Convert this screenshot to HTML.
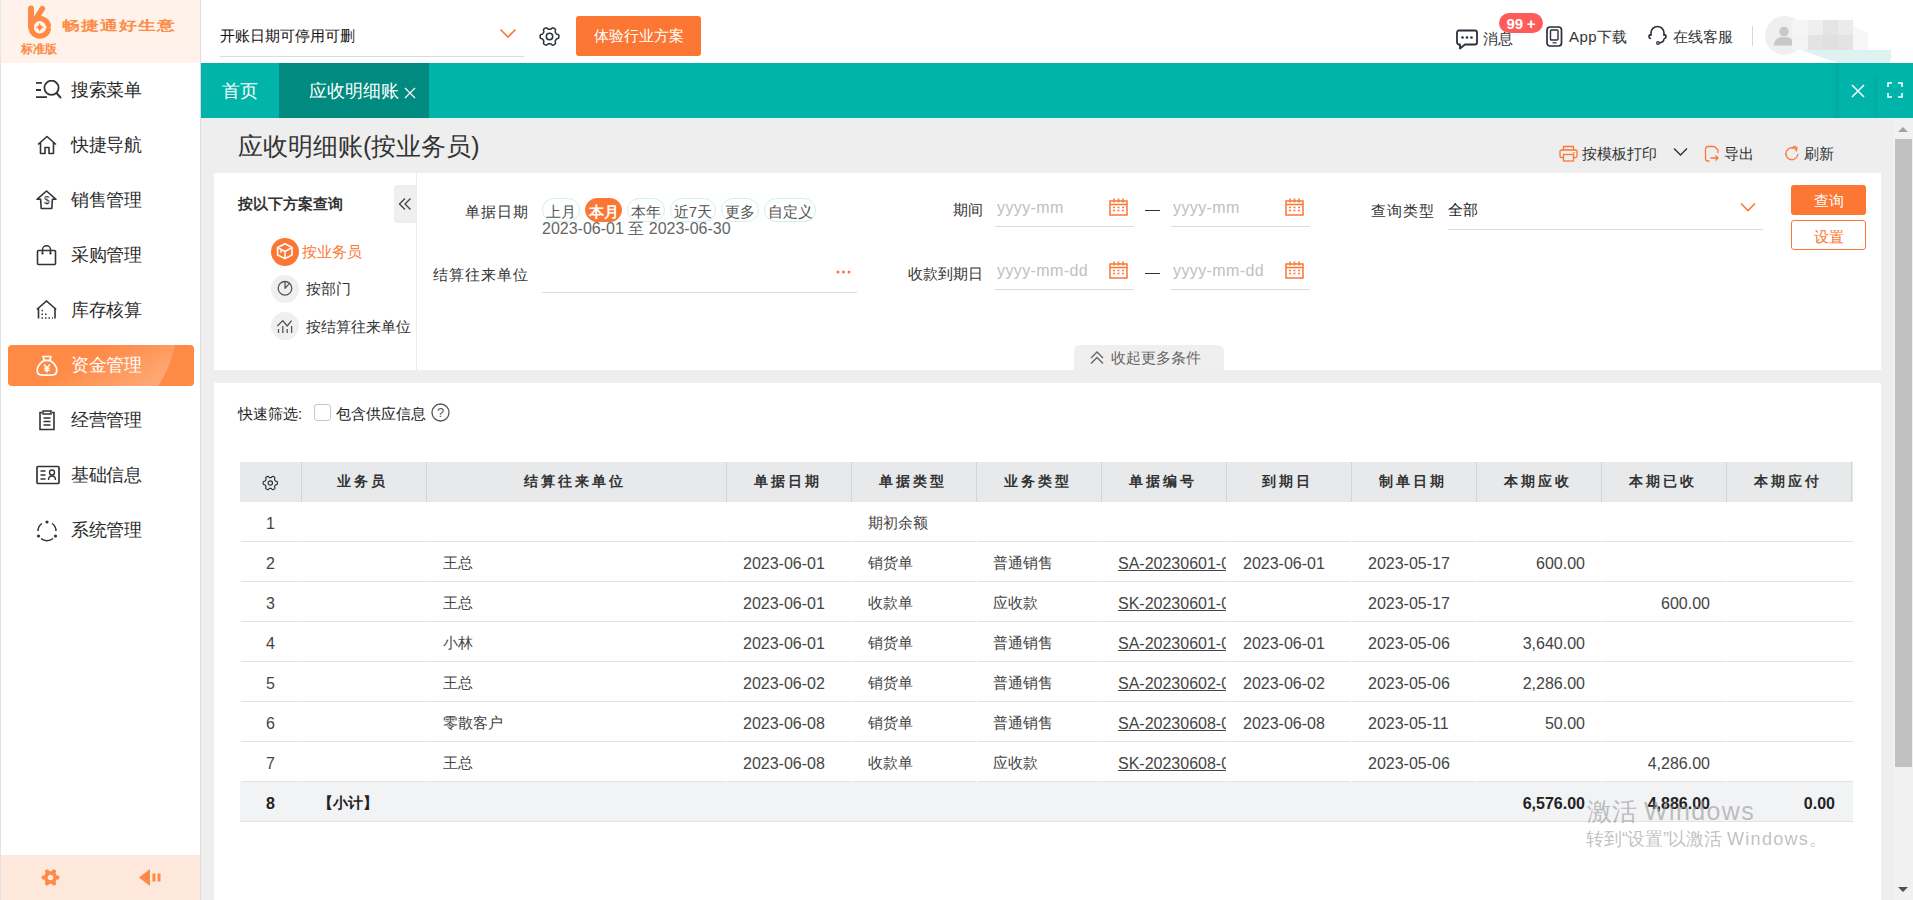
<!DOCTYPE html>
<html><head><meta charset="utf-8">
<style>
*{margin:0;padding:0;box-sizing:border-box}
html,body{width:1913px;height:900px;overflow:hidden;background:#eeeeee;font-family:"Liberation Sans",sans-serif;color:#333}
.a{position:absolute;white-space:nowrap}
svg{display:block}
/* header */
#logo{left:0;top:0;width:200px;height:63px;background:#fef2ea;border-left:1px solid #e3e6ea}
#hdr{left:201px;top:0;width:1712px;height:63px;background:#fff}
#side{left:0;top:63px;width:201px;height:837px;background:#fff;border-left:1px solid #e3e3e3;border-right:1px solid #dcdcdc}
.mi{left:0;width:200px;height:55px}
.mi .t{position:absolute;left:71px;top:0;font-size:18px;line-height:55px;color:#2b2b2b;letter-spacing:-0.5px}
.mi svg{position:absolute;left:36px;top:17px}
#tabs{left:201px;top:63px;width:1712px;height:55px;background:#00b4aa}
.lbl{font-size:15px;color:#333;text-align:right}
.ul{border-bottom:1px solid #dcdcdc}
.ph{font-size:16px;color:#c0c0c0;letter-spacing:0.4px}
.pill{height:24px;border:1px solid #d3f0ee;border-radius:12px;font-size:15px;line-height:25px;text-align:center;color:#555}
th,td{font-size:15px}
.th{top:461px;height:40px;font-size:14px;font-weight:bold;line-height:40px;text-align:center;color:#333;letter-spacing:3px}
.rl{height:1px;background:#e3e3e3}
.c{font-size:15px;color:#444;line-height:42px}
.d{font-size:16px;margin-top:1px}
.n{text-align:right}
.lnk{text-decoration:underline;overflow:hidden;width:108px}
</style></head><body>

<!-- LOGO -->
<div class="a" id="logo">
  <svg class="a" style="left:20px;top:0px" width="40" height="42" viewBox="0 0 40 42">
    <path d="M10 8.5V27" stroke="#fd8a45" stroke-width="6" stroke-linecap="round"/>
    <path d="M21.3 8.6L15.5 18" stroke="#fd8a45" stroke-width="5.6" stroke-linecap="round"/>
    <path d="M27.4 25.2A8.8 8.8 0 1 0 27.4 29.4" fill="none" stroke="#fd8a45" stroke-width="5.2" stroke-linecap="round"/>
    <path d="M18.7 22.8Q19.3 26.7 23.2 27.3Q19.3 27.9 18.7 31.8Q18.1 27.9 14.2 27.3Q18.1 26.7 18.7 22.8Z" fill="#fd8a45"/>
  </svg>
  <div class="a" style="left:61px;top:17px;font-size:14px;line-height:18px;font-weight:bold;color:#fd8a45;letter-spacing:0.6px;transform:scale(1.3,0.95);transform-origin:0 0">畅捷通好生意</div>
  <div class="a" style="left:20px;top:41px;font-size:12px;line-height:16px;font-weight:bold;color:#fd8a45">标准版</div>
</div>

<!-- HEADER -->
<div class="a" style="left:200px;top:0;width:1px;height:63px;background:#dedede"></div>
<div class="a" id="hdr"></div>
<div class="a" style="left:220px;top:26px;font-size:15px;line-height:20px;color:#111">开账日期可停用可删</div>
<div class="a" style="left:220px;top:55px;width:304px;height:2px;border-bottom:1px solid #dcdcdc"></div>
<svg class="a" style="left:499px;top:28px" width="18" height="11" viewBox="0 0 18 11"><path d="M1.5 1.5 L9 9 L16.5 1.5" fill="none" stroke="#fd7734" stroke-width="1.6"/></svg>
<svg class="a" style="left:539px;top:26px" width="21" height="21" viewBox="0 0 21 21"><path d="M10.50 3.27L10.82 3.28L11.13 3.28L11.45 3.27L11.79 3.19L12.17 2.95L12.65 2.48L13.17 2.04L13.64 1.87L14.06 1.90L14.45 2.02L14.83 2.19L15.19 2.38L15.53 2.60L15.86 2.84L16.17 3.12L16.40 3.47L16.49 3.96L16.37 4.63L16.20 5.28L16.18 5.73L16.29 6.06L16.44 6.34L16.60 6.61L16.76 6.89L16.91 7.16L17.07 7.44L17.24 7.71L17.47 7.96L17.88 8.17L18.52 8.35L19.16 8.58L19.54 8.91L19.73 9.29L19.82 9.68L19.86 10.09L19.87 10.50L19.86 10.91L19.82 11.32L19.73 11.71L19.54 12.09L19.16 12.42L18.52 12.65L17.88 12.83L17.47 13.04L17.24 13.29L17.07 13.56L16.91 13.84L16.76 14.11L16.60 14.39L16.44 14.66L16.29 14.94L16.18 15.27L16.20 15.72L16.37 16.37L16.49 17.04L16.40 17.53L16.17 17.88L15.86 18.16L15.53 18.40L15.19 18.62L14.83 18.81L14.45 18.98L14.06 19.10L13.64 19.13L13.17 18.96L12.65 18.52L12.17 18.05L11.79 17.81L11.45 17.73L11.13 17.72L10.82 17.72L10.50 17.73L10.18 17.72L9.87 17.72L9.55 17.73L9.21 17.81L8.83 18.05L8.35 18.52L7.83 18.96L7.36 19.13L6.94 19.10L6.55 18.98L6.17 18.81L5.81 18.62L5.47 18.40L5.14 18.16L4.83 17.88L4.60 17.53L4.51 17.04L4.63 16.37L4.80 15.72L4.82 15.27L4.71 14.94L4.56 14.66L4.40 14.39L4.24 14.11L4.09 13.84L3.93 13.56L3.76 13.29L3.53 13.04L3.12 12.83L2.48 12.65L1.84 12.42L1.46 12.09L1.27 11.71L1.18 11.32L1.14 10.91L1.13 10.50L1.14 10.09L1.18 9.68L1.27 9.29L1.46 8.91L1.84 8.58L2.48 8.35L3.12 8.17L3.53 7.96L3.76 7.71L3.93 7.44L4.09 7.16L4.24 6.89L4.40 6.61L4.56 6.34L4.71 6.06L4.82 5.73L4.80 5.28L4.63 4.63L4.51 3.96L4.60 3.47L4.83 3.12L5.14 2.84L5.47 2.60L5.81 2.38L6.17 2.19L6.55 2.02L6.94 1.90L7.36 1.87L7.83 2.04L8.35 2.48L8.83 2.95L9.21 3.19L9.55 3.27L9.87 3.28L10.18 3.28Z" fill="none" stroke="#2b2f3a" stroke-width="1.5" stroke-linejoin="round"/><circle cx="10.5" cy="10.5" r="3.2" fill="none" stroke="#2b2f3a" stroke-width="1.5"/></svg>
<div class="a" style="left:576px;top:16px;width:125px;height:40px;background:#fd7734;border-radius:3px;color:#fff;font-size:15px;line-height:40px;text-align:center">体验行业方案</div>

<!-- header right -->
<svg class="a" style="left:1456px;top:29px" width="22" height="21" viewBox="0 0 22 21"><path d="M3 1.5h16a2 2 0 0 1 2 2v10a2 2 0 0 1-2 2H9l-5 4v-4H3a2 2 0 0 1-2-2v-10a2 2 0 0 1 2-2z" fill="none" stroke="#2b2f3a" stroke-width="1.8" stroke-linejoin="round"/><circle cx="6.5" cy="8.5" r="1.3" fill="#2b2f3a"/><circle cx="11" cy="8.5" r="1.3" fill="#2b2f3a"/><circle cx="15.5" cy="8.5" r="1.3" fill="#2b2f3a"/></svg>
<div class="a" style="left:1483px;top:29px;font-size:15px;line-height:20px;color:#333">消息</div>
<div class="a" style="left:1499px;top:13px;width:44px;height:20px;background:#fe5b5b;border-radius:10px;color:#fff;font-size:15px;font-weight:bold;line-height:21px;text-align:center;letter-spacing:-0.2px">99 +</div>
<svg class="a" style="left:1546px;top:26px" width="17" height="21" viewBox="0 0 17 21"><rect x="1" y="1" width="14.5" height="19" rx="3" fill="none" stroke="#2b2f3a" stroke-width="1.7"/><rect x="4.5" y="4" width="7.5" height="10" rx="1" fill="none" stroke="#2b2f3a" stroke-width="1.4"/><path d="M6.5 16.8h4" stroke="#2b2f3a" stroke-width="1.2"/></svg>
<div class="a" style="left:1569px;top:27px;font-size:15px;line-height:20px;color:#333;letter-spacing:0.4px">App下载</div>
<svg class="a" style="left:1648px;top:25px" width="20" height="20" viewBox="0 0 20 20"><path d="M3 11V8a6.5 6.5 0 0 1 13 0v3" fill="none" stroke="#2b2f3a" stroke-width="1.6"/><path d="M3 9.5a1.8 1.8 0 0 0 0 4M16 9.5a1.8 1.8 0 0 1 0 4" fill="none" stroke="#2b2f3a" stroke-width="1.6"/><path d="M16 13.5q0 4-5 4.5" fill="none" stroke="#2b2f3a" stroke-width="1.5"/><circle cx="10" cy="18" r="1.3" fill="none" stroke="#2b2f3a" stroke-width="1.3"/></svg>
<div class="a" style="left:1673px;top:27px;font-size:15px;line-height:20px;color:#333">在线客服</div>
<div class="a" style="left:1752px;top:26px;width:1px;height:20px;background:#d8d8d8"></div>
<div class="a" style="left:1765px;top:16px;width:39px;height:39px;border-radius:50%;background:#efefef"></div>
<svg class="a" style="left:1774px;top:25px" width="22" height="22" viewBox="0 0 22 22"><circle cx="10" cy="6.5" r="4.8" fill="#c8c8c8"/><path d="M0 20.5q0-7 7-8.5h6q7 1.5 7 8.5z" fill="#c8c8c8"/></svg>
<div class="a" style="left:1792px;top:20px;width:16px;height:15px;background:#f5f5f5"></div>
<div class="a" style="left:1808px;top:20px;width:15px;height:15px;background:#efefef"></div>
<div class="a" style="left:1823px;top:20px;width:15px;height:15px;background:#e4e4e4"></div>
<div class="a" style="left:1838px;top:20px;width:15px;height:15px;background:#ebebec"></div>
<div class="a" style="left:1792px;top:35px;width:16px;height:15px;background:#f3f3f3"></div>
<div class="a" style="left:1808px;top:35px;width:15px;height:15px;background:#e3e3e3"></div>
<div class="a" style="left:1823px;top:35px;width:15px;height:15px;background:#e0e0df"></div>
<div class="a" style="left:1838px;top:35px;width:15px;height:15px;background:#e3e3e3"></div>
<svg class="a" style="left:1838px;top:20px" width="31" height="30" viewBox="0 0 31 30"><path d="M0 0H8L15 5V15H0z" fill="#ebebec"/><path d="M15 5.5L30 13V30H15z" fill="#f6f7f9"/></svg>
<svg class="a" style="left:1795px;top:47px" width="100" height="18" viewBox="0 0 100 18"><path d="M6 3H96Q97 10 94 17H47Q30 12 6 3z" fill="#dff2f1"/></svg>

<!-- SIDEBAR -->
<div class="a" id="side">
</div>
<div class="a mi" style="top:63px"><svg width="26" height="20" viewBox="0 0 26 20"><path d="M0 2.8h6M0 10h5M0 17.2h11" stroke="#333" stroke-width="1.8"/><circle cx="15.5" cy="7.8" r="7.1" fill="none" stroke="#333" stroke-width="1.8"/><path d="M20.5 13l4 4.5" stroke="#333" stroke-width="1.9" stroke-linecap="round"/></svg><div class="t">搜索菜单</div></div>
<div class="a mi" style="top:118px"><svg width="22" height="20" viewBox="0 0 22 20"><path d="M2 9.5L11 1.5l9 8M4.5 7.5V18.5h4.5v-6h4v6h4.5V7.5" fill="none" stroke="#333" stroke-width="1.6" stroke-linejoin="round"/></svg><div class="t">快捷导航</div></div>
<div class="a mi" style="top:173px"><svg width="22" height="20" viewBox="0 0 22 20"><path d="M10.5 1L1 9.3h3.6L5.2 18.5h10.6l.6-9.2H20z" fill="none" stroke="#333" stroke-width="1.6" stroke-linejoin="round"/><text x="10.8" y="14.3" font-size="10" text-anchor="middle" fill="#333" font-family="Liberation Sans">$</text></svg><div class="t">销售管理</div></div>
<div class="a mi" style="top:228px"><svg width="22" height="21" viewBox="0 0 22 21"><rect x="1.5" y="5.5" width="18" height="14" rx="1" fill="none" stroke="#333" stroke-width="1.6"/><path d="M6.5 8.5V4.8a4 4 0 0 1 8 0v3.7" fill="none" stroke="#333" stroke-width="1.5"/><circle cx="6.5" cy="8.5" r="1.1" fill="#333"/><circle cx="14.5" cy="8.5" r="1.1" fill="#333"/></svg><div class="t">采购管理</div></div>
<div class="a mi" style="top:283px"><svg width="22" height="20" viewBox="0 0 22 20"><path d="M0.8 9.5L10.5 1l9.7 8.5M2.5 7.8V18.5M19 7.8V18.5" fill="none" stroke="#333" stroke-width="1.6"/><path d="M5.5 10.5h1.5M5.5 14.2h1.5M9 14.2h1.5M5.5 18h1.5M9 18h1.5M12.5 18h1.5M16 18h1" stroke="#333" stroke-width="1.6"/></svg><div class="t">库存核算</div></div>
<div class="a" style="left:8px;top:345px;width:186px;height:41px;border-radius:4px;background:#fe8a45"></div>
<svg class="a" style="left:8px;top:345px" width="186" height="41" viewBox="0 0 186 41"><defs><linearGradient id="lg" x1="0" y1="0" x2="1" y2="0.6"><stop offset="0.35" stop-color="#fff" stop-opacity="0"/><stop offset="1" stop-color="#fff" stop-opacity="0.25"/></linearGradient></defs><path d="M40 0H167Q162 24 150 41H40z" fill="url(#lg)"/></svg>
<div class="a mi" style="top:338px"><svg width="22" height="22" viewBox="0 0 22 22"><path d="M8 5.5Q1.5 9.5 1.2 15Q1.2 20 6 20.2H16Q20.8 20 20.8 15Q20.5 9.5 14 5.5z" fill="none" stroke="#fff" stroke-width="1.7" stroke-linejoin="round"/><path d="M7 1.5H15L13.8 5.5H8.2z" fill="none" stroke="#fff" stroke-width="1.6" stroke-linejoin="round"/><path d="M8 9.5l3 3.2 3-3.2M11 12.7V17.5M8.3 13.2h5.4M8.3 15.3h5.4" fill="none" stroke="#fff" stroke-width="1.4"/></svg><div class="t" style="color:#fff">资金管理</div></div>
<div class="a mi" style="top:393px"><svg width="22" height="21" viewBox="0 0 22 21"><path d="M6 2.5h-2v17h14v-17h-2" fill="none" stroke="#333" stroke-width="1.6"/><rect x="7" y="1" width="8" height="3" fill="none" stroke="#333" stroke-width="1.5"/><path d="M7.5 8h7M7.5 11.5h7M7.5 15h7" stroke="#333" stroke-width="1.5"/></svg><div class="t">经营管理</div></div>
<div class="a mi" style="top:448px"><svg width="24" height="20" viewBox="0 0 24 20"><rect x="1" y="1.5" width="22" height="17" rx="1" fill="none" stroke="#333" stroke-width="1.7"/><path d="M4.5 6h5M4.5 10h5M4.5 14h5" stroke="#333" stroke-width="1.5"/><circle cx="16" cy="7.5" r="2.5" fill="none" stroke="#333" stroke-width="1.4"/><path d="M12.5 15q0-4 3.5-4t3.5 4" fill="none" stroke="#333" stroke-width="1.4"/></svg><div class="t">基础信息</div></div>
<div class="a mi" style="top:503px"><svg width="22" height="22" viewBox="0 0 22 22"><path d="M6 3.5A9 9 0 0 0 2 11M16 3.5A9 9 0 0 1 20 11M5 18.5a9 9 0 0 0 12 0" fill="none" stroke="#333" stroke-width="1.5"/><circle cx="11" cy="2" r="1.6" fill="#333"/><circle cx="2.5" cy="16" r="1.6" fill="#333"/><circle cx="19.5" cy="16" r="1.6" fill="#333"/></svg><div class="t">系统管理</div></div>
<div class="a" style="left:1px;top:855px;width:199px;height:45px;background:#fee7db"></div>
<svg class="a" style="left:41px;top:868px" width="19" height="19" viewBox="0 0 19 19"><path d="M9.50 3.17L9.78 3.17L10.05 3.17L10.34 3.14L10.64 3.04L11.00 2.73L11.47 2.16L11.99 1.61L12.46 1.38L12.86 1.38L13.24 1.48L13.59 1.64L13.93 1.82L14.26 2.02L14.57 2.26L14.85 2.53L15.05 2.88L15.09 3.40L14.87 4.13L14.61 4.82L14.52 5.28L14.59 5.60L14.71 5.85L14.84 6.10L14.98 6.33L15.12 6.57L15.26 6.81L15.42 7.05L15.66 7.26L16.11 7.42L16.84 7.53L17.57 7.71L18.01 8.00L18.21 8.35L18.31 8.73L18.36 9.11L18.37 9.50L18.36 9.89L18.31 10.27L18.21 10.65L18.01 11.00L17.57 11.29L16.84 11.47L16.11 11.58L15.66 11.74L15.42 11.95L15.26 12.19L15.12 12.43L14.98 12.67L14.84 12.90L14.71 13.15L14.59 13.40L14.52 13.72L14.61 14.18L14.87 14.87L15.09 15.60L15.05 16.12L14.85 16.47L14.57 16.74L14.26 16.98L13.93 17.18L13.59 17.36L13.24 17.52L12.86 17.62L12.46 17.62L11.99 17.39L11.47 16.84L11.00 16.27L10.64 15.96L10.34 15.86L10.05 15.83L9.78 15.83L9.50 15.83L9.22 15.83L8.95 15.83L8.66 15.86L8.36 15.96L8.00 16.27L7.53 16.84L7.01 17.39L6.54 17.62L6.14 17.62L5.76 17.52L5.41 17.36L5.07 17.18L4.74 16.98L4.43 16.74L4.15 16.47L3.95 16.12L3.91 15.60L4.13 14.87L4.39 14.18L4.48 13.72L4.41 13.40L4.29 13.15L4.16 12.90L4.02 12.67L3.88 12.43L3.74 12.19L3.58 11.95L3.34 11.74L2.89 11.58L2.16 11.47L1.43 11.29L0.99 11.00L0.79 10.65L0.69 10.27L0.64 9.89L0.63 9.50L0.64 9.11L0.69 8.73L0.79 8.35L0.99 8.00L1.43 7.71L2.16 7.53L2.89 7.42L3.34 7.26L3.58 7.05L3.74 6.81L3.88 6.57L4.02 6.33L4.16 6.10L4.29 5.85L4.41 5.60L4.48 5.28L4.39 4.82L4.13 4.13L3.91 3.40L3.95 2.88L4.15 2.53L4.43 2.26L4.74 2.02L5.07 1.82L5.41 1.64L5.76 1.48L6.14 1.38L6.54 1.38L7.01 1.61L7.53 2.16L8.00 2.73L8.36 3.04L8.66 3.14L8.95 3.17L9.22 3.17Z" fill="#fd8a45"/><circle cx="9.5" cy="9.5" r="2.8" fill="#fee7db"/></svg>
<svg class="a" style="left:138px;top:868px" width="24" height="19" viewBox="0 0 24 19"><path d="M1 9.5L12 1v17z" fill="#fd8a45"/><rect x="14.5" y="5.5" width="3" height="8" fill="#fd8a45"/><rect x="19.5" y="5.5" width="3" height="8" fill="#fd8a45"/></svg>

<!-- TABS -->
<div class="a" id="tabs"></div>
<div class="a" style="left:201px;top:64px;width:78px;height:55px;color:#fff;font-size:18px;line-height:55px;text-align:center">首页</div>
<div class="a" style="left:279px;top:63px;width:150px;height:55px;background:#008a80"></div><div class="a" style="left:279px;top:64px;height:55px;color:#fff;font-size:18px;line-height:55px;padding-left:30px">应收明细账</div><svg class="a" style="left:404px;top:87px" width="12" height="12" viewBox="0 0 12 12"><path d="M1 1l10 10M11 1L1 11" stroke="#fff" stroke-width="1.2"/></svg>
<div class="a" style="left:1831px;top:63px;width:8px;height:55px;background:linear-gradient(90deg,rgba(0,0,0,0),rgba(0,0,0,0.06))"></div><div class="a" style="left:1872px;top:75px;width:5px;height:43px;background:linear-gradient(90deg,rgba(0,0,0,0),rgba(0,0,0,0.05))"></div>
<svg class="a" style="left:1851px;top:84px" width="14" height="14" viewBox="0 0 14 14"><path d="M1 1l12 12M13 1L1 13" stroke="#fff" stroke-width="1.5"/></svg>
<svg class="a" style="left:1887px;top:82px" width="16" height="16" viewBox="0 0 16 16"><path d="M1 5V1h4M11 1h4v4M15 11v4h-4M5 15H1v-4" fill="none" stroke="#fff" stroke-width="1.6"/></svg>

<!-- scrollbar -->
<div class="a" style="left:1893px;top:118px;width:20px;height:782px;background:#f1f1f1"></div>
<svg class="a" style="left:1898px;top:126px" width="10" height="7" viewBox="0 0 10 7"><path d="M0 6L5 1l5 5z" fill="#a3a3a3"/></svg>
<div class="a" style="left:1895px;top:139px;width:17px;height:628px;background:#c1c1c1"></div>
<svg class="a" style="left:1898px;top:886px" width="10" height="7" viewBox="0 0 10 7"><path d="M0 1L5 6l5-5z" fill="#505050"/></svg>

<!-- TITLE & TOOLBAR -->
<div class="a" style="left:238px;top:128px;font-size:25px;line-height:36px;color:#333">应收明细账(按业务员)</div>

<!-- QUERY PANEL -->
<div class="a" style="left:214px;top:173px;width:1667px;height:197px;background:#fff"></div>
<div class="a" style="left:416px;top:173px;width:1px;height:197px;background:#ececec"></div>


<!-- RESULT PANEL -->
<div class="a" style="left:214px;top:383px;width:1667px;height:517px;background:#fff"></div>
<!-- toolbar -->
<svg class="a" style="left:1559px;top:145px" width="19" height="17" viewBox="0 0 19 17"><path d="M4.5 5V1.5h10V5" fill="none" stroke="#fd7734" stroke-width="1.3"/><path d="M4.5 12.5H2.5a1.5 1.5 0 0 1-1.5-1.5V6.5A1.5 1.5 0 0 1 2.5 5h14A1.5 1.5 0 0 1 18 6.5V11a1.5 1.5 0 0 1-1.5 1.5h-2" fill="none" stroke="#fd7734" stroke-width="1.3"/><rect x="4.5" y="9.5" width="10" height="6.5" fill="none" stroke="#fd7734" stroke-width="1.3"/><circle cx="15" cy="7.8" r="0.9" fill="#fd7734"/></svg>
<div class="a" style="left:1582px;top:144px;font-size:15px;line-height:20px;color:#333">按模板打印</div>
<svg class="a" style="left:1673px;top:147px" width="15" height="10" viewBox="0 0 15 10"><path d="M1 1.5l6.5 6.5 6.5-6.5" fill="none" stroke="#333" stroke-width="1.4"/></svg>
<svg class="a" style="left:1704px;top:145px" width="16" height="17" viewBox="0 0 16 17"><path d="M10.5 1.5H4a2.5 2.5 0 0 0-2.5 2.5v9.5A2.5 2.5 0 0 0 4 16h1.5M10.5 1.5l3.5 3.5v3" fill="none" stroke="#fd7734" stroke-width="1.3" stroke-linejoin="round"/><path d="M6.5 13h7.5M11.5 10.5l2.5 2.5-2.5 2.5" fill="none" stroke="#fd7734" stroke-width="1.3"/></svg>
<div class="a" style="left:1724px;top:144px;font-size:15px;line-height:20px;color:#333">导出</div>
<svg class="a" style="left:1784px;top:145px" width="16" height="17" viewBox="0 0 16 17"><path d="M13.8 9.5A6 6 0 1 1 11.5 4" fill="none" stroke="#fd7734" stroke-width="1.3" stroke-linecap="round"/><path d="M9.5 1.5l3.5.8-.8 3.7" fill="none" stroke="#fd7734" stroke-width="1.3" stroke-linecap="round" stroke-linejoin="round"/></svg>
<div class="a" style="left:1804px;top:144px;font-size:15px;line-height:20px;color:#333">刷新</div>

<!-- query left -->
<div class="a" style="left:238px;top:194px;font-size:15px;line-height:20px;font-weight:bold;color:#333">按以下方案查询</div>
<div class="a" style="left:394px;top:185px;width:22px;height:38px;background:#efefef;border-radius:4px 0 0 4px"></div>
<svg class="a" style="left:398px;top:197px" width="14" height="14" viewBox="0 0 14 14"><path d="M7 1.5L1.5 7 7 12.5M12.5 1.5L7 7l5.5 5.5" fill="none" stroke="#444" stroke-width="1.4"/></svg>
<div class="a" style="left:271px;top:238px;width:28px;height:28px;border-radius:50%;background:#fd7734"></div>
<svg class="a" style="left:276px;top:243px" width="18" height="18" viewBox="0 0 18 18"><path d="M9 0.8L16 4.5V12L9 15.6 1.6 12V4.5z" fill="none" stroke="#fff" stroke-width="1.6" stroke-linejoin="round"/><path d="M1.8 4.6L9 8.5l7-3.9M9 8.5v7" fill="none" stroke="#fff" stroke-width="1.6" stroke-linejoin="round"/><path d="M5 6.6v3.2" stroke="#fff" stroke-width="1.4"/></svg>
<div class="a" style="left:302px;top:242px;font-size:15px;line-height:20px;color:#fd7734">按业务员</div>
<div class="a" style="left:271px;top:275px;width:28px;height:28px;border-radius:50%;background:#efefef"></div>
<svg class="a" style="left:277px;top:280px" width="16" height="17" viewBox="0 0 16 17"><circle cx="8" cy="8.3" r="6.8" fill="none" stroke="#555" stroke-width="1.3"/><path d="M8 1.5V8.3L12.3 3.6" fill="none" stroke="#555" stroke-width="1.3" stroke-linejoin="round"/></svg>
<div class="a" style="left:306px;top:279px;font-size:15px;line-height:20px;color:#333">按部门</div>
<div class="a" style="left:271px;top:312px;width:28px;height:28px;border-radius:50%;background:#efefef"></div>
<svg class="a" style="left:275px;top:318px" width="20" height="17" viewBox="0 0 20 17"><path d="M2.3 8L7.8 2.6 12.2 8 16.6 2.6" fill="none" stroke="#555" stroke-width="1.3" stroke-linejoin="round"/><path d="M3.5 11v4M7.8 8v7M12.2 11v4M16.6 8v7" stroke="#555" stroke-width="1.3"/></svg>
<div class="a" style="left:306px;top:317px;font-size:15px;line-height:20px;color:#333">按结算往来单位</div>

<!-- form row 1 -->
<div class="a lbl" style="left:428px;top:202px;width:101px;line-height:20px;letter-spacing:1px">单据日期</div>
<div class="a pill" style="left:542px;top:198px;width:38px">上月</div>
<div class="a pill" style="left:585px;top:198px;width:37px;background:#fd7734;border-color:#fd7734;color:#fff;font-weight:bold">本月</div>
<div class="a pill" style="left:627px;top:198px;width:38px">本年</div>
<div class="a pill" style="left:670px;top:198px;width:46px">近7天</div>
<div class="a pill" style="left:721px;top:198px;width:38px">更多</div>
<div class="a pill" style="left:764px;top:198px;width:52px">自定义</div>
<div class="a" style="left:542px;top:220px;font-size:16px;line-height:18px;color:#666">2023-06-01 至 2023-06-30</div>

<div class="a lbl" style="left:900px;top:200px;width:83px;line-height:20px">期间</div>
<div class="a ul" style="left:995px;top:200px;width:139px;height:27px"></div>
<div class="a ph" style="left:997px;top:198px;line-height:20px">yyyy-mm</div>
<div class="a ul" style="left:1171px;top:200px;width:139px;height:27px"></div>
<div class="a ph" style="left:1173px;top:198px;line-height:20px">yyyy-mm</div>
<div class="a" style="left:1145px;top:210px;width:15px;height:1px;background:#333"></div>

<div class="a lbl" style="left:1340px;top:201px;width:95px;line-height:20px;letter-spacing:1px">查询类型</div>
<div class="a" style="left:1448px;top:200px;font-size:15px;line-height:20px;color:#222">全部</div>
<div class="a ul" style="left:1448px;top:200px;width:315px;height:30px"></div>
<svg class="a" style="left:1740px;top:202px" width="16" height="10" viewBox="0 0 16 10"><path d="M1 1.5l7 7 7-7" fill="none" stroke="#fd7734" stroke-width="1.6"/></svg>
<div class="a" style="left:1791px;top:185px;width:75px;height:30px;background:#fd7734;border-radius:3px;color:#fff;font-size:15px;line-height:32px;text-align:center">查询</div>
<div class="a" style="left:1791px;top:220px;width:75px;height:30px;background:#fff;border:1px solid #fd7734;border-radius:3px;color:#fd7734;font-size:15px;line-height:31px;text-align:center">设置</div>

<!-- form row 2 -->
<div class="a lbl" style="left:400px;top:265px;width:129px;line-height:20px;letter-spacing:1px">结算往来单位</div>
<div class="a ul" style="left:542px;top:262px;width:315px;height:31px"></div>
<svg class="a" style="left:836px;top:270px" width="15" height="4" viewBox="0 0 15 4"><circle cx="2" cy="2" r="1.5" fill="#fd7734"/><circle cx="7.5" cy="2" r="1.5" fill="#fd7734"/><circle cx="13" cy="2" r="1.5" fill="#fd7734"/></svg>
<div class="a lbl" style="left:880px;top:264px;width:103px;line-height:20px">收款到期日</div>
<div class="a ul" style="left:995px;top:263px;width:139px;height:27px"></div>
<div class="a ph" style="left:997px;top:261px;line-height:20px">yyyy-mm-dd</div>
<div class="a ul" style="left:1171px;top:263px;width:139px;height:27px"></div>
<div class="a ph" style="left:1173px;top:261px;line-height:20px">yyyy-mm-dd</div>
<div class="a" style="left:1145px;top:273px;width:15px;height:1px;background:#333"></div>
<svg class="a" style="left:1109px;top:198px" width="19" height="18" viewBox="0 0 19 18"><rect x="1" y="3" width="17" height="14" fill="none" stroke="#fd7734" stroke-width="1.5"/><path d="M1 6.5h17M5 0.5v4M14 0.5v4M9.5 0.5v4" stroke="#fd7734" stroke-width="1.5"/><path d="M4 9.5h2M8.5 9.5h2M13 9.5h2M4 12.5h2M8.5 12.5h2M13 12.5h2" stroke="#fd7734" stroke-width="1.3"/></svg><svg class="a" style="left:1285px;top:198px" width="19" height="18" viewBox="0 0 19 18"><rect x="1" y="3" width="17" height="14" fill="none" stroke="#fd7734" stroke-width="1.5"/><path d="M1 6.5h17M5 0.5v4M14 0.5v4M9.5 0.5v4" stroke="#fd7734" stroke-width="1.5"/><path d="M4 9.5h2M8.5 9.5h2M13 9.5h2M4 12.5h2M8.5 12.5h2M13 12.5h2" stroke="#fd7734" stroke-width="1.3"/></svg><svg class="a" style="left:1109px;top:261px" width="19" height="18" viewBox="0 0 19 18"><rect x="1" y="3" width="17" height="14" fill="none" stroke="#fd7734" stroke-width="1.5"/><path d="M1 6.5h17M5 0.5v4M14 0.5v4M9.5 0.5v4" stroke="#fd7734" stroke-width="1.5"/><path d="M4 9.5h2M8.5 9.5h2M13 9.5h2M4 12.5h2M8.5 12.5h2M13 12.5h2" stroke="#fd7734" stroke-width="1.3"/></svg><svg class="a" style="left:1285px;top:261px" width="19" height="18" viewBox="0 0 19 18"><rect x="1" y="3" width="17" height="14" fill="none" stroke="#fd7734" stroke-width="1.5"/><path d="M1 6.5h17M5 0.5v4M14 0.5v4M9.5 0.5v4" stroke="#fd7734" stroke-width="1.5"/><path d="M4 9.5h2M8.5 9.5h2M13 9.5h2M4 12.5h2M8.5 12.5h2M13 12.5h2" stroke="#fd7734" stroke-width="1.3"/></svg>
<!-- collapse tab -->
<div class="a" style="left:1074px;top:345px;width:150px;height:25px;background:#efefef;border-radius:6px 6px 0 0"></div>
<svg class="a" style="left:1090px;top:351px" width="14" height="13" viewBox="0 0 14 13"><path d="M1 7l6-6 6 6M1 12.5l6-6 6 6" fill="none" stroke="#666" stroke-width="1.4"/></svg>
<div class="a" style="left:1111px;top:348px;font-size:15px;line-height:20px;color:#666">收起更多条件</div>

<!-- quick filter -->
<div class="a" style="left:238px;top:404px;font-size:15px;line-height:20px;color:#222">快速筛选:</div>
<div class="a" style="left:314px;top:404px;width:17px;height:17px;border:1px solid #c8c8c8;border-radius:3px;background:#fff"></div>
<div class="a" style="left:336px;top:404px;font-size:15px;line-height:20px;color:#222">包含供应信息</div>
<svg class="a" style="left:431px;top:403px" width="19" height="19" viewBox="0 0 19 19"><circle cx="9.5" cy="9.5" r="8.5" fill="none" stroke="#555" stroke-width="1.3"/><text x="9.5" y="14" font-size="13" text-anchor="middle" fill="#555" font-family="Liberation Sans">?</text></svg>


<!-- TABLE -->
<div class="a" style="left:240px;top:462px;width:1613px;height:40px;background:#e8e9eb"></div>
<div class="a" style="left:301px;top:462px;width:1px;height:40px;background:#d4d5d7"></div>
<div class="a th" style="left:301px;width:125px;padding-right:2px">业务员</div>
<div class="a" style="left:426px;top:462px;width:1px;height:40px;background:#d4d5d7"></div>
<div class="a th" style="left:426px;width:300px;padding-right:2px">结算往来单位</div>
<div class="a" style="left:726px;top:462px;width:1px;height:40px;background:#d4d5d7"></div>
<div class="a th" style="left:726px;width:125px;padding-right:2px">单据日期</div>
<div class="a" style="left:851px;top:462px;width:1px;height:40px;background:#d4d5d7"></div>
<div class="a th" style="left:851px;width:125px;padding-right:2px">单据类型</div>
<div class="a" style="left:976px;top:462px;width:1px;height:40px;background:#d4d5d7"></div>
<div class="a th" style="left:976px;width:125px;padding-right:2px">业务类型</div>
<div class="a" style="left:1101px;top:462px;width:1px;height:40px;background:#d4d5d7"></div>
<div class="a th" style="left:1101px;width:125px;padding-right:2px">单据编号</div>
<div class="a" style="left:1226px;top:462px;width:1px;height:40px;background:#d4d5d7"></div>
<div class="a th" style="left:1226px;width:125px;padding-right:2px">到期日</div>
<div class="a" style="left:1351px;top:462px;width:1px;height:40px;background:#d4d5d7"></div>
<div class="a th" style="left:1351px;width:125px;padding-right:2px">制单日期</div>
<div class="a" style="left:1476px;top:462px;width:1px;height:40px;background:#d4d5d7"></div>
<div class="a th" style="left:1476px;width:125px;padding-right:2px">本期应收</div>
<div class="a" style="left:1601px;top:462px;width:1px;height:40px;background:#d4d5d7"></div>
<div class="a th" style="left:1601px;width:125px;padding-right:2px">本期已收</div>
<div class="a" style="left:1726px;top:462px;width:1px;height:40px;background:#d4d5d7"></div>
<div class="a th" style="left:1726px;width:125px;padding-right:2px">本期应付</div>
<div class="a" style="left:1851px;top:462px;width:1px;height:40px;background:#d4d5d7"></div>
<svg class="a" style="left:262px;top:475px" width="17" height="16" viewBox="0 0 17 16"><path d="M8.30 2.58L8.54 2.58L8.77 2.58L9.01 2.57L9.27 2.51L9.56 2.30L9.93 1.91L10.33 1.55L10.70 1.40L11.03 1.42L11.33 1.51L11.61 1.64L11.89 1.78L12.15 1.95L12.41 2.13L12.64 2.35L12.81 2.62L12.87 3.01L12.75 3.55L12.60 4.06L12.57 4.41L12.65 4.67L12.76 4.88L12.88 5.08L13.00 5.29L13.11 5.49L13.23 5.70L13.36 5.90L13.54 6.09L13.87 6.24L14.39 6.37L14.90 6.54L15.21 6.78L15.36 7.07L15.43 7.38L15.47 7.69L15.48 8.00L15.47 8.31L15.43 8.62L15.36 8.93L15.21 9.22L14.90 9.46L14.39 9.63L13.87 9.76L13.54 9.91L13.36 10.10L13.23 10.30L13.11 10.51L13.00 10.71L12.88 10.92L12.76 11.12L12.65 11.33L12.57 11.59L12.60 11.94L12.75 12.45L12.87 12.99L12.81 13.38L12.64 13.65L12.41 13.87L12.15 14.05L11.89 14.22L11.61 14.36L11.33 14.49L11.03 14.58L10.70 14.60L10.33 14.45L9.93 14.09L9.56 13.70L9.27 13.49L9.01 13.43L8.77 13.42L8.54 13.42L8.30 13.42L8.06 13.42L7.83 13.42L7.59 13.43L7.33 13.49L7.04 13.70L6.67 14.09L6.27 14.45L5.90 14.60L5.57 14.58L5.27 14.49L4.99 14.36L4.71 14.22L4.45 14.05L4.19 13.87L3.96 13.65L3.79 13.38L3.73 12.99L3.85 12.45L4.00 11.94L4.03 11.59L3.95 11.33L3.84 11.12L3.72 10.92L3.60 10.71L3.49 10.51L3.37 10.30L3.24 10.10L3.06 9.91L2.73 9.76L2.21 9.63L1.70 9.46L1.39 9.22L1.24 8.93L1.17 8.62L1.13 8.31L1.12 8.00L1.13 7.69L1.17 7.38L1.24 7.07L1.39 6.78L1.70 6.54L2.21 6.37L2.73 6.24L3.06 6.09L3.24 5.90L3.37 5.70L3.49 5.49L3.60 5.29L3.72 5.08L3.84 4.88L3.95 4.67L4.03 4.41L4.00 4.06L3.85 3.55L3.73 3.01L3.79 2.62L3.96 2.35L4.19 2.13L4.45 1.95L4.71 1.78L4.99 1.64L5.27 1.51L5.57 1.42L5.90 1.40L6.27 1.55L6.67 1.91L7.04 2.30L7.33 2.51L7.59 2.57L7.83 2.58L8.06 2.58Z" fill="none" stroke="#333" stroke-width="1.2" stroke-linejoin="round"/><circle cx="8.3" cy="8" r="2.2" fill="none" stroke="#333" stroke-width="1.2"/></svg>
<div class="a rl" style="left:241px;top:541px;width:60px"></div>
<div class="a rl" style="left:302px;top:541px;width:124px"></div>
<div class="a rl" style="left:427px;top:541px;width:299px"></div>
<div class="a rl" style="left:727px;top:541px;width:124px"></div>
<div class="a rl" style="left:852px;top:541px;width:124px"></div>
<div class="a rl" style="left:977px;top:541px;width:124px"></div>
<div class="a rl" style="left:1102px;top:541px;width:124px"></div>
<div class="a rl" style="left:1227px;top:541px;width:124px"></div>
<div class="a rl" style="left:1352px;top:541px;width:124px"></div>
<div class="a rl" style="left:1477px;top:541px;width:124px"></div>
<div class="a rl" style="left:1602px;top:541px;width:124px"></div>
<div class="a rl" style="left:1727px;top:541px;width:126px"></div>
<div class="a c d" style="left:240px;top:502px;width:61px;text-align:center;">1</div>
<div class="a c" style="left:868px;top:502px;">期初余额</div>
<div class="a rl" style="left:241px;top:581px;width:60px"></div>
<div class="a rl" style="left:302px;top:581px;width:124px"></div>
<div class="a rl" style="left:427px;top:581px;width:299px"></div>
<div class="a rl" style="left:727px;top:581px;width:124px"></div>
<div class="a rl" style="left:852px;top:581px;width:124px"></div>
<div class="a rl" style="left:977px;top:581px;width:124px"></div>
<div class="a rl" style="left:1102px;top:581px;width:124px"></div>
<div class="a rl" style="left:1227px;top:581px;width:124px"></div>
<div class="a rl" style="left:1352px;top:581px;width:124px"></div>
<div class="a rl" style="left:1477px;top:581px;width:124px"></div>
<div class="a rl" style="left:1602px;top:581px;width:124px"></div>
<div class="a rl" style="left:1727px;top:581px;width:126px"></div>
<div class="a c d" style="left:240px;top:542px;width:61px;text-align:center;">2</div>
<div class="a c" style="left:443px;top:542px;">王总</div>
<div class="a c d" style="left:743px;top:542px;">2023-06-01</div>
<div class="a c" style="left:868px;top:542px;">销货单</div>
<div class="a c" style="left:993px;top:542px;">普通销售</div>
<div class="a c lnk d" style="left:1118px;top:542px;">SA-20230601-0001</div>
<div class="a c d" style="left:1243px;top:542px;">2023-06-01</div>
<div class="a c d" style="left:1368px;top:542px;">2023-05-17</div>
<div class="a c n d" style="left:1476px;top:542px;width:109px;">600.00</div>
<div class="a rl" style="left:241px;top:621px;width:60px"></div>
<div class="a rl" style="left:302px;top:621px;width:124px"></div>
<div class="a rl" style="left:427px;top:621px;width:299px"></div>
<div class="a rl" style="left:727px;top:621px;width:124px"></div>
<div class="a rl" style="left:852px;top:621px;width:124px"></div>
<div class="a rl" style="left:977px;top:621px;width:124px"></div>
<div class="a rl" style="left:1102px;top:621px;width:124px"></div>
<div class="a rl" style="left:1227px;top:621px;width:124px"></div>
<div class="a rl" style="left:1352px;top:621px;width:124px"></div>
<div class="a rl" style="left:1477px;top:621px;width:124px"></div>
<div class="a rl" style="left:1602px;top:621px;width:124px"></div>
<div class="a rl" style="left:1727px;top:621px;width:126px"></div>
<div class="a c d" style="left:240px;top:582px;width:61px;text-align:center;">3</div>
<div class="a c" style="left:443px;top:582px;">王总</div>
<div class="a c d" style="left:743px;top:582px;">2023-06-01</div>
<div class="a c" style="left:868px;top:582px;">收款单</div>
<div class="a c" style="left:993px;top:582px;">应收款</div>
<div class="a c lnk d" style="left:1118px;top:582px;">SK-20230601-0001</div>
<div class="a c d" style="left:1368px;top:582px;">2023-05-17</div>
<div class="a c n d" style="left:1601px;top:582px;width:109px;">600.00</div>
<div class="a rl" style="left:241px;top:661px;width:60px"></div>
<div class="a rl" style="left:302px;top:661px;width:124px"></div>
<div class="a rl" style="left:427px;top:661px;width:299px"></div>
<div class="a rl" style="left:727px;top:661px;width:124px"></div>
<div class="a rl" style="left:852px;top:661px;width:124px"></div>
<div class="a rl" style="left:977px;top:661px;width:124px"></div>
<div class="a rl" style="left:1102px;top:661px;width:124px"></div>
<div class="a rl" style="left:1227px;top:661px;width:124px"></div>
<div class="a rl" style="left:1352px;top:661px;width:124px"></div>
<div class="a rl" style="left:1477px;top:661px;width:124px"></div>
<div class="a rl" style="left:1602px;top:661px;width:124px"></div>
<div class="a rl" style="left:1727px;top:661px;width:126px"></div>
<div class="a c d" style="left:240px;top:622px;width:61px;text-align:center;">4</div>
<div class="a c" style="left:443px;top:622px;">小林</div>
<div class="a c d" style="left:743px;top:622px;">2023-06-01</div>
<div class="a c" style="left:868px;top:622px;">销货单</div>
<div class="a c" style="left:993px;top:622px;">普通销售</div>
<div class="a c lnk d" style="left:1118px;top:622px;">SA-20230601-0002</div>
<div class="a c d" style="left:1243px;top:622px;">2023-06-01</div>
<div class="a c d" style="left:1368px;top:622px;">2023-05-06</div>
<div class="a c n d" style="left:1476px;top:622px;width:109px;">3,640.00</div>
<div class="a rl" style="left:241px;top:701px;width:60px"></div>
<div class="a rl" style="left:302px;top:701px;width:124px"></div>
<div class="a rl" style="left:427px;top:701px;width:299px"></div>
<div class="a rl" style="left:727px;top:701px;width:124px"></div>
<div class="a rl" style="left:852px;top:701px;width:124px"></div>
<div class="a rl" style="left:977px;top:701px;width:124px"></div>
<div class="a rl" style="left:1102px;top:701px;width:124px"></div>
<div class="a rl" style="left:1227px;top:701px;width:124px"></div>
<div class="a rl" style="left:1352px;top:701px;width:124px"></div>
<div class="a rl" style="left:1477px;top:701px;width:124px"></div>
<div class="a rl" style="left:1602px;top:701px;width:124px"></div>
<div class="a rl" style="left:1727px;top:701px;width:126px"></div>
<div class="a c d" style="left:240px;top:662px;width:61px;text-align:center;">5</div>
<div class="a c" style="left:443px;top:662px;">王总</div>
<div class="a c d" style="left:743px;top:662px;">2023-06-02</div>
<div class="a c" style="left:868px;top:662px;">销货单</div>
<div class="a c" style="left:993px;top:662px;">普通销售</div>
<div class="a c lnk d" style="left:1118px;top:662px;">SA-20230602-0001</div>
<div class="a c d" style="left:1243px;top:662px;">2023-06-02</div>
<div class="a c d" style="left:1368px;top:662px;">2023-05-06</div>
<div class="a c n d" style="left:1476px;top:662px;width:109px;">2,286.00</div>
<div class="a rl" style="left:241px;top:741px;width:60px"></div>
<div class="a rl" style="left:302px;top:741px;width:124px"></div>
<div class="a rl" style="left:427px;top:741px;width:299px"></div>
<div class="a rl" style="left:727px;top:741px;width:124px"></div>
<div class="a rl" style="left:852px;top:741px;width:124px"></div>
<div class="a rl" style="left:977px;top:741px;width:124px"></div>
<div class="a rl" style="left:1102px;top:741px;width:124px"></div>
<div class="a rl" style="left:1227px;top:741px;width:124px"></div>
<div class="a rl" style="left:1352px;top:741px;width:124px"></div>
<div class="a rl" style="left:1477px;top:741px;width:124px"></div>
<div class="a rl" style="left:1602px;top:741px;width:124px"></div>
<div class="a rl" style="left:1727px;top:741px;width:126px"></div>
<div class="a c d" style="left:240px;top:702px;width:61px;text-align:center;">6</div>
<div class="a c" style="left:443px;top:702px;">零散客户</div>
<div class="a c d" style="left:743px;top:702px;">2023-06-08</div>
<div class="a c" style="left:868px;top:702px;">销货单</div>
<div class="a c" style="left:993px;top:702px;">普通销售</div>
<div class="a c lnk d" style="left:1118px;top:702px;">SA-20230608-0001</div>
<div class="a c d" style="left:1243px;top:702px;">2023-06-08</div>
<div class="a c d" style="left:1368px;top:702px;">2023-05-11</div>
<div class="a c n d" style="left:1476px;top:702px;width:109px;">50.00</div>
<div class="a rl" style="left:241px;top:781px;width:60px"></div>
<div class="a rl" style="left:302px;top:781px;width:124px"></div>
<div class="a rl" style="left:427px;top:781px;width:299px"></div>
<div class="a rl" style="left:727px;top:781px;width:124px"></div>
<div class="a rl" style="left:852px;top:781px;width:124px"></div>
<div class="a rl" style="left:977px;top:781px;width:124px"></div>
<div class="a rl" style="left:1102px;top:781px;width:124px"></div>
<div class="a rl" style="left:1227px;top:781px;width:124px"></div>
<div class="a rl" style="left:1352px;top:781px;width:124px"></div>
<div class="a rl" style="left:1477px;top:781px;width:124px"></div>
<div class="a rl" style="left:1602px;top:781px;width:124px"></div>
<div class="a rl" style="left:1727px;top:781px;width:126px"></div>
<div class="a c d" style="left:240px;top:742px;width:61px;text-align:center;">7</div>
<div class="a c" style="left:443px;top:742px;">王总</div>
<div class="a c d" style="left:743px;top:742px;">2023-06-08</div>
<div class="a c" style="left:868px;top:742px;">收款单</div>
<div class="a c" style="left:993px;top:742px;">应收款</div>
<div class="a c lnk d" style="left:1118px;top:742px;">SK-20230608-0001</div>
<div class="a c d" style="left:1368px;top:742px;">2023-05-06</div>
<div class="a c n d" style="left:1601px;top:742px;width:109px;">4,286.00</div>
<div class="a" style="left:240px;top:782px;width:1613px;height:40px;background:#f2f3f5"></div>
<div class="a rl" style="left:241px;top:821px;width:60px"></div>
<div class="a rl" style="left:302px;top:821px;width:124px"></div>
<div class="a rl" style="left:427px;top:821px;width:299px"></div>
<div class="a rl" style="left:727px;top:821px;width:124px"></div>
<div class="a rl" style="left:852px;top:821px;width:124px"></div>
<div class="a rl" style="left:977px;top:821px;width:124px"></div>
<div class="a rl" style="left:1102px;top:821px;width:124px"></div>
<div class="a rl" style="left:1227px;top:821px;width:124px"></div>
<div class="a rl" style="left:1352px;top:821px;width:124px"></div>
<div class="a rl" style="left:1477px;top:821px;width:124px"></div>
<div class="a rl" style="left:1602px;top:821px;width:124px"></div>
<div class="a rl" style="left:1727px;top:821px;width:126px"></div>
<div class="a c d" style="left:240px;top:782px;width:61px;text-align:center;font-weight:bold;color:#222;">8</div>
<div class="a c" style="left:318px;top:782px;font-weight:bold;color:#222;">【小计】</div>
<div class="a c n d" style="left:1476px;top:782px;width:109px;font-weight:bold;color:#222;">6,576.00</div>
<div class="a c n d" style="left:1601px;top:782px;width:109px;font-weight:bold;color:#222;">4,886.00</div>
<div class="a c n d" style="left:1726px;top:782px;width:109px;font-weight:bold;color:#222;">0.00</div>
<!-- watermark -->
<div class="a" style="left:1587px;top:795px;font-size:25px;line-height:32px;color:rgba(150,150,150,0.6)">激活 <span style="letter-spacing:1.4px">Windows</span></div>
<div class="a" style="left:1586px;top:827px;font-size:18px;line-height:24px;color:rgba(150,150,150,0.6)">转到<span style="letter-spacing:-1px">“</span>设置<span style="letter-spacing:-1px">”</span>以激活 <span style="letter-spacing:1.3px">Windows</span>。</div>
</body></html>
